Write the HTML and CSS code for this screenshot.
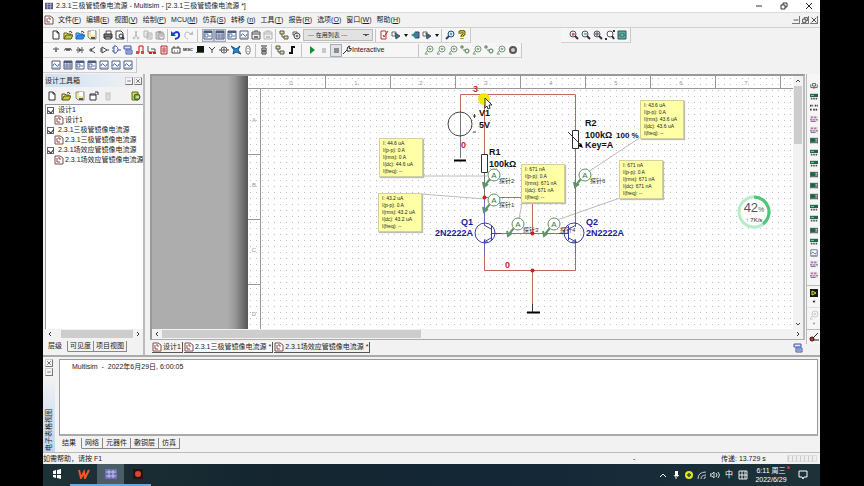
FILE: index.html
```html
<!DOCTYPE html>
<html lang="zh-CN">
  <head>
    <meta charset="utf-8">
    <title>2.3.1三极管镜像电流源 - Multisim</title>
    <link rel="stylesheet" href="styles.css">
  </head>
  <body>
    <!-- icon shapes, all on a 10x10 grid -->
    <svg class="sprite" aria-hidden="true">
      <symbol id="new" viewBox="0 0 10 10"><path d="M2 1h4l2 2v6H2zM6 1v2h2" fill="#fff" stroke="#333"/></symbol>
      <symbol id="open" viewBox="0 0 10 10"><path d="M1 9V3h3l1 1h3v2" fill="#f5ee9a" stroke="#565410"/><path d="M1 9l2-4h7L8 9z" fill="#c5c73c" stroke="#565410"/><path d="M6 2q2-2 3 1" fill="none" stroke="#333"/></symbol>
      <symbol id="folder" viewBox="0 0 10 10"><path d="M1 9V3h3l1 1h3v2" fill="#7cc0f0" stroke="#1668b8"/><path d="M1 9l2-4h7L8 9z" fill="#3490e0" stroke="#1668b8"/><path d="M6 2q2-2 3 1" fill="none" stroke="#333"/></symbol>
      <symbol id="save" viewBox="0 0 10 10"><path d="M2 1h7v8H3L1 7V1z" fill="#eee9a8" stroke="#888"/><path d="M4 1h4v4H4z" fill="#fff"/><path d="M4 7h4v2H4z" fill="#555"/></symbol>
      <symbol id="print" viewBox="0 0 10 10"><path d="M3 4V1h5v3" fill="#fff" stroke="#555"/><path d="M1 4h8v4H1z" fill="#777" stroke="#333"/><path d="M2 7h6v2H2z" fill="#ddd" stroke="#333"/></symbol>
      <symbol id="preview" viewBox="0 0 10 10"><path d="M1 1h5l2 2v6H1z" fill="#fff" stroke="#444"/><circle cx="6" cy="6" r="2" fill="#dfeef5" stroke="#333"/><path d="M7 7l2 2" stroke="#333" stroke-width="2"/></symbol>
      <symbol id="cut" viewBox="0 0 10 10"><path d="M4 1l2 6M6 1L4 7" stroke="#bbb" fill="none"/><circle cx="3" cy="8" r="1" fill="none" stroke="#bbb"/><circle cx="7" cy="8" r="1" fill="none" stroke="#bbb"/></symbol>
      <symbol id="copy" viewBox="0 0 10 10"><path d="M1 1h4v6H1zM4 3h5v6H4z" fill="#eee" stroke="#b5b5b5"/><path d="M5 5h3M5 7h3" stroke="#b5b5b5"/></symbol>
      <symbol id="paste" viewBox="0 0 10 10"><path d="M1 2h7v7H1z" fill="#ccc" stroke="#aaa"/><path d="M3 1h3v2H3z" fill="#999"/><path d="M4 4h5v5H4z" fill="#eee" stroke="#999"/><path d="M5 6h3" stroke="#999"/></symbol>
      <symbol id="undo" viewBox="0 0 10 10"><path d="M2 4q5-4 6 0t-4 5" fill="none" stroke="#1c3fc0" stroke-width="2"/><path d="M0 1v5h5z" fill="#1c3fc0"/></symbol>
      <symbol id="redo" viewBox="0 0 10 10"><path d="M8 4Q3 0 2 4t3 5" fill="none" stroke="#bbb"/><path d="M10 1v4H6z" fill="#bbb"/></symbol>
      <symbol id="panel" viewBox="0 0 10 10"><path d="M1 1h8v8H1z" fill="#fff" stroke="#4c5c80"/><path d="M1 2h8" stroke="#4c5c80" stroke-width="2"/><path d="M2 4h3v3H2zM6 6h2" stroke="#5573b0" fill="none"/></symbol>
      <symbol id="grid" viewBox="0 0 10 10"><path d="M1 1h8v8H1z" fill="#d5dbe8" stroke="#4c5c80"/><path d="M1 2h8" stroke="#4c5c80" stroke-width="2"/><path d="M1 5h8M1 7h8M4 3v6M7 3v6" stroke="#7482a5"/></symbol>
      <symbol id="wave" viewBox="0 0 10 10"><path d="M1 1h8v8H1z" fill="#fff" stroke="#4c5c80"/><path d="M2 6q1-4 3-1t3-1" fill="none" stroke="#3b5fd0"/><path d="M2 8h6" stroke="#888"/></symbol>
      <symbol id="case" viewBox="0 0 10 10"><path d="M1 2h8v7H1z" fill="#eee" stroke="#555"/><path d="M3 1h4M1 4h8" stroke="#555"/><path d="M3 6h4v2H3z" fill="#777"/></symbol>
      <symbol id="tree" viewBox="0 0 10 10"><path d="M1 1h4v3H1zM5 6h4v3H5z" fill="#e2dc85" stroke="#555"/><path d="M3 4v3h2" fill="none" stroke="#555"/></symbol>
      <symbol id="hand" viewBox="0 0 10 10"><path d="M2 2h4v3H2z" fill="#fff" stroke="#555"/><circle cx="6" cy="6" r="3" fill="#ddd" stroke="#555"/><path d="M5 6h2M6 5v2" stroke="#555"/></symbol>
      <symbol id="erc" viewBox="0 0 10 10"><path d="M2 1h5v8H2z" fill="#fff" stroke="#b33"/><path d="M4 5l1 2 4-6" fill="none" stroke="#c22"/></symbol>
      <symbol id="fwd" viewBox="0 0 10 10"><path d="M1 2h4v4H1z" fill="#fff" stroke="#666"/><path d="M4 3l5 3-4 3z" fill="#44687a" stroke="#456"/></symbol>
      <symbol id="back" viewBox="0 0 10 10"><path d="M5 2h4v6H5z" fill="#4a7aa0" stroke="#345"/><path d="M6 2L1 5l5 3z" fill="#2a8797"/></symbol>
      <symbol id="down" viewBox="0 0 10 10"><path d="M3 4h4L5 7z" fill="#111"/></symbol>
      <symbol id="find" viewBox="0 0 10 10"><circle cx="6" cy="4" r="3" fill="#cfe6f0" stroke="#234a78"/><path d="M4 6L1 9" stroke="#234a78" stroke-width="2"/><path d="M5 4h2" stroke="#234a78"/></symbol>
      <symbol id="help" viewBox="0 0 10 10"><path d="M3 4V2q2-2 4 0v2L5 6v1M5 8v1" fill="none" stroke="#6b6800" stroke-width="3"/><path d="M3 4V2q2-2 4 0v2L5 6v1M5 8v1" fill="none" stroke="#d5d526"/></symbol>
      <symbol id="zoomin" viewBox="0 0 10 10"><circle cx="4" cy="4" r="3" fill="#e8eef2" stroke="#555"/><path d="M6 6l3 3" stroke="#334" stroke-width="2"/><path d="M3 4h3M4 3v3" stroke="#c33"/></symbol>
      <symbol id="zoomout" viewBox="0 0 10 10"><circle cx="4" cy="4" r="3" fill="#e8eef2" stroke="#555"/><path d="M6 6l3 3" stroke="#334" stroke-width="2"/><path d="M3 4h3" stroke="#248a6a"/></symbol>
      <symbol id="zoomarea" viewBox="0 0 10 10"><circle cx="4" cy="4" r="3" fill="#d8e2ea" stroke="#555"/><path d="M3 3h2v2H3z" fill="none" stroke="#556"/><path d="M6 6l3 3" stroke="#334" stroke-width="2"/></symbol>
      <symbol id="zoomfit" viewBox="0 0 10 10"><circle cx="5" cy="4" r="3" fill="#fff" stroke="#555"/><path d="M7 6l2 3M0 9h2M8 1h2" stroke="#334" stroke-width="2"/></symbol>
      <symbol id="full" viewBox="0 0 10 10"><path d="M1 1h8v8H1z" fill="#5fa8a0" stroke="#285a58"/><path d="M3 4h4v2H3z" fill="#dff" stroke="#285a58"/></symbol>

      <symbol id="source" viewBox="0 0 10 10"><path d="M2 4h6M5 2v5M4 6h2" stroke="#555"/></symbol>
      <symbol id="resistor" viewBox="0 0 10 10"><path d="M1 5h1l1-2 1 3 1-3 1 3 1-3 1 2h1" fill="none" stroke="#555"/></symbol>
      <symbol id="diode" viewBox="0 0 10 10"><path d="M1 5h8M3 2v6M7 2v6" stroke="#666"/><path d="M4 3l3 2-3 2z" fill="#555"/></symbol>
      <symbol id="bjt" viewBox="0 0 10 10"><path d="M2 5h2M4 3v4M4 5l4-3M4 5l4 3" fill="none" stroke="#444"/></symbol>
      <symbol id="amp" viewBox="0 0 10 10"><path d="M3 2l5 3-5 3zM1 4h2M1 6h2M8 5h2" fill="#fff" stroke="#444"/></symbol>
      <symbol id="gate" viewBox="0 0 10 10"><path d="M3 1h2q4 3 0 7H3zM1 3h2M1 6h2M7 5h3" fill="#fff" stroke="#4459a0"/></symbol>
      <symbol id="gates" viewBox="0 0 10 10"><path d="M1 1h7v3H1zM3 5h6v4H3z" fill="#dde5fa" stroke="#3a53a4"/><path d="M5 6v2M7 6v2" stroke="#3a53a4"/></symbol>
      <symbol id="chip" viewBox="0 0 10 10"><path d="M4 8V1h4v7" fill="none" stroke="#b01818"/><path d="M1 6h3v3H1zM6 6h3v3H6z" fill="#d84848"/></symbol>
      <symbol id="mixed" viewBox="0 0 10 10"><path d="M1 1v6h7V4H4" fill="none" stroke="#555"/><path d="M2 7h3v2H2zM6 7h3v2H6z" fill="#c22"/></symbol>
      <symbol id="seg" viewBox="0 0 10 10"><path d="M2 1h6v8H2z" fill="#f3dada" stroke="#a33"/><path d="M4 3h2v4H4zM4 5h2" fill="none" stroke="#c55"/></symbol>
      <symbol id="relay" viewBox="0 0 10 10"><path d="M1 3h8v5H1zM3 1v2M7 1v2M3 6h1M6 6h1" fill="#fff" stroke="#444"/></symbol>
      <symbol id="screen" viewBox="0 0 10 10"><path d="M2 1h7v6H2z" fill="#111"/><path d="M1 7h8v1H1z" fill="#396b3b"/></symbol>
      <symbol id="antenna" viewBox="0 0 10 10"><path d="M5 8V5M2 2l3 3 3-3" fill="none" stroke="#444"/></symbol>
      <symbol id="motor" viewBox="0 0 10 10"><circle cx="5" cy="5" r="3" fill="#fff" stroke="#555"/><path d="M0 5h10M5 3v4" stroke="#555"/></symbol>
      <symbol id="ni" viewBox="0 0 10 10"><path d="M0 1l5 3 4-3-2 4 3 4-5-2-3 2 1-4z" fill="#258ccf" stroke="#14508c"/></symbol>
      <symbol id="conn" viewBox="0 0 10 10"><path d="M4 1h2l1 2v4L6 9H4L3 7V3z" fill="#fff" stroke="#777"/><path d="M5 3v1M5 6v1" stroke="#777"/></symbol>
      <symbol id="mcu" viewBox="0 0 10 10"><path d="M2 1h6M3 3h4v6H3zM4 5h2v2H4z" fill="#fff" stroke="#333"/></symbol>
      <symbol id="bus" viewBox="0 0 10 10"><path d="M2 8h3V2h3" fill="none" stroke="#111" stroke-width="2"/></symbol>
      <symbol id="play" viewBox="0 0 10 10"><path d="M3 1l5 4-5 4z" fill="#149035"/></symbol>
      <symbol id="pause" viewBox="0 0 10 10"><path d="M4 3v5M6 3v5" stroke="#999"/></symbol>
      <symbol id="stop" viewBox="0 0 10 10"><path d="M3 3h5v5H3z" fill="#8c8c8c"/></symbol>
      <symbol id="wrench" viewBox="0 0 10 10"><path d="M1 9l4-4M5 5q0-4 3-4L7 3l1 1 1-1q1 4-4 3z" fill="#eee" stroke="#333"/></symbol>
      <symbol id="probe" viewBox="0 0 10 10"><circle cx="6" cy="4" r="3" fill="#eef5ee" stroke="#7a9a7a"/><path d="M5 3l1 2 1-2M3 6L1 9h3" fill="none" stroke="#7a9a7a"/></symbol>
      <symbol id="probe2" viewBox="0 0 10 10"><circle cx="7" cy="6" r="2" fill="#eef5ee" stroke="#4f7a4f"/><path d="M0 2h4M2 0v4M3 5h2" stroke="#4f7a4f"/></symbol>
      <symbol id="gear" viewBox="0 0 10 10"><circle cx="5" cy="5" r="3" fill="#ccc" stroke="#555" stroke-width="2"/></symbol>

      <symbol id="sheet" viewBox="0 0 10 10"><path d="M1 1h5l3 2v6H1z" fill="#fff" stroke="#7d4d4d"/><path d="M3 3v4h3M4 3h2v2" fill="none" stroke="#9d4444"/></symbol>
      <symbol id="rename" viewBox="0 0 10 10"><path d="M1 3h6v6H1zM1 4h6" fill="#fff" stroke="#334"/><path d="M6 1h3v3" fill="none" stroke="#334"/></symbol>
      <symbol id="trash" viewBox="0 0 10 10"><path d="M3 3h4v6H3zM2 2h6" fill="#ddd" stroke="#c4c4c4"/></symbol>
      <symbol id="config" viewBox="0 0 10 10"><path d="M1 1h6v8H1z" fill="#d3d95b" stroke="#646b20"/><circle cx="6" cy="6" r="3" fill="#87ac4b" stroke="#385820"/><path d="M5 6h3" stroke="#fff"/></symbol>
      <symbol id="meter" viewBox="0 0 10 8"><path d="M0 0h10v4H0z" fill="#236548"/><path d="M1 2h4" stroke="#7ff0ac"/><path d="M1 6h2M4 6h2M7 6h2" stroke="#555" stroke-width="2"/></symbol>
      <symbol id="scope" viewBox="0 0 10 8"><path d="M0 0h10v7H0z" fill="#5c6a6a"/><path d="M1 1h5v4H1z" fill="#0d6b3c"/><path d="M7 2h2M7 4h2M1 7h8" stroke="#ddd"/></symbol>
      <symbol id="agilent" viewBox="0 0 10 8"><path d="M0 0h10v8H0z" fill="#eee1ec"/><path d="M1 1h3v2H1zM5 1h3v2H5z" fill="#bb7b9b"/><path d="M0 5h3M4 5h2M7 5h3M1 7h6" stroke="#4d4c80"/></symbol>
      <symbol id="multi" viewBox="0 0 10 8"><path d="M1 2v4h8V2M3 1h4v3H3z" fill="#fff" stroke="#2c4c44"/><path d="M4 5h2v2H4z" fill="#c33"/></symbol>
      <symbol id="dots" viewBox="0 0 10 8"><path d="M0 1h4M6 1h4M0 6h3M4 6h2M7 6h3" stroke="#333" stroke-width="2" stroke-dasharray="2 1"/></symbol>

      <symbol id="uparr" viewBox="0 0 10 10"><path d="M3 6l2-2 2 2" fill="none" stroke="#444"/></symbol>
      <symbol id="downarr" viewBox="0 0 10 10"><path d="M3 4l2 2 2-2" fill="none" stroke="#444"/></symbol>
      <symbol id="leftarr" viewBox="0 0 10 10"><path d="M6 3L4 5l2 2" fill="none" stroke="#333"/></symbol>
      <symbol id="rightarr" viewBox="0 0 10 10"><path d="M4 3l2 2-2 2" fill="none" stroke="#333"/></symbol>
      <symbol id="min" viewBox="0 0 10 10"><path d="M2 5h6" stroke="#333"/></symbol>
      <symbol id="max" viewBox="0 0 10 10"><path d="M2 4h4v4H2zM4 4V2h4v4H6" fill="none" stroke="#333"/></symbol>
      <symbol id="close" viewBox="0 0 10 10"><path d="M2 2l6 6M8 2L2 8" stroke="#222"/></symbol>
    </svg>

    <div class="window">
      <header class="titlebar">
        <svg class="appicon" viewBox="0 0 10 10"><path d="M0 1h10v8H0z" fill="#53577d"/><path d="M1 3h8M1 6h8M3 1v8M7 1v8" stroke="#a6abc9"/></svg>
        <span class="title">2.3.1三极管镜像电流源 - Multisim - [2.3.1三极管镜像电流源 *]</span>
        <div class="winbuttons">
          <button aria-label="最小化"><svg><use href="#min"/></svg></button>
          <button aria-label="还原"><svg><use href="#max"/></svg></button>
          <button aria-label="关闭"><svg><use href="#close"/></svg></button>
        </div>
      </header>

      <nav class="menubar">
        <svg class="icon"><use href="#sheet"/></svg>
        <ul class="menu">
          <li>文件(<u>F</u>)</li>
          <li>编辑(<u>E</u>)</li>
          <li>视图(<u>V</u>)</li>
          <li>绘制(<u>P</u>)</li>
          <li>MCU(<u>M</u>)</li>
          <li>仿真(<u>S</u>)</li>
          <li>转移 (<u>n</u>)</li>
          <li>工具(<u>T</u>)</li>
          <li>报告(<u>R</u>)</li>
          <li>选项(<u>O</u>)</li>
          <li>窗口(<u>W</u>)</li>
          <li>帮助(<u>H</u>)</li>
        </ul>
        <div class="mdibuttons">
          <button aria-label="最小化文档"><svg><use href="#min"/></svg></button>
          <button aria-label="还原文档"><svg><use href="#max"/></svg></button>
          <button aria-label="关闭文档"><svg><use href="#close"/></svg></button>
        </div>
      </nav>

      <div class="toolrow">
        <div class="toolbar">
          <button><svg><use href="#new"/></svg></button>
          <button><svg><use href="#open"/></svg></button>
          <button><svg><use href="#folder"/></svg></button>
          <button><svg><use href="#save"/></svg></button>
          <i class="sep"></i>
          <button><svg><use href="#print"/></svg></button>
          <button><svg><use href="#preview"/></svg></button>
          <i class="sep"></i>
          <button><svg><use href="#cut"/></svg></button>
          <button><svg><use href="#copy"/></svg></button>
          <button><svg><use href="#paste"/></svg></button>
          <i class="sep"></i>
          <button><svg><use href="#undo"/></svg></button>
          <button><svg><use href="#redo"/></svg></button>
          <i class="sep wide"></i>
          <button class="on"><svg><use href="#panel"/></svg></button>
          <button class="on"><svg><use href="#grid"/></svg></button>
          <button><svg><use href="#panel"/></svg></button>
          <button><svg><use href="#wave"/></svg></button>
          <button><svg><use href="#case"/></svg></button>
          <button class="off"><svg><use href="#case"/></svg></button>
          <i class="sep"></i>
          <button><svg><use href="#tree"/></svg></button>
          <button><svg><use href="#hand"/></svg></button>
          <select class="inuse" aria-label="在用列表"><option>--- 在用列表 ---</option></select>
          <i class="sep"></i>
          <button><svg><use href="#erc"/></svg></button>
          <button><svg><use href="#fwd"/></svg></button>
          <button class="drop"><svg><use href="#down"/></svg></button>
          <button><svg><use href="#back"/></svg></button>
          <button><svg><use href="#fwd"/></svg></button>
          <button class="drop"><svg><use href="#down"/></svg></button>
          <i class="sep"></i>
          <button><svg><use href="#find"/></svg></button>
          <button><svg><use href="#help"/></svg></button>
        </div>
        <div class="toolbar">
          <button><svg><use href="#zoomin"/></svg></button>
          <button><svg><use href="#zoomout"/></svg></button>
          <button><svg><use href="#zoomarea"/></svg></button>
          <button><svg><use href="#zoomfit"/></svg></button>
          <button><svg><use href="#full"/></svg></button>
        </div>
      </div>

      <div class="toolrow">
        <div class="toolbar">
          <button><svg><use href="#source"/></svg></button>
          <button><svg><use href="#resistor"/></svg></button>
          <button><svg><use href="#diode"/></svg></button>
          <button><svg><use href="#bjt"/></svg></button>
          <button><svg><use href="#amp"/></svg></button>
          <button><svg><use href="#gate"/></svg></button>
          <button><svg><use href="#gates"/></svg></button>
          <button><svg><use href="#chip"/></svg></button>
          <button><svg><use href="#mixed"/></svg></button>
          <button><svg><use href="#seg"/></svg></button>
          <button><svg><use href="#relay"/></svg></button>
          <button class="misc">MISC</button>
          <button><svg><use href="#screen"/></svg></button>
          <button><svg><use href="#antenna"/></svg></button>
          <button><svg><use href="#motor"/></svg></button>
          <button><svg><use href="#ni"/></svg></button>
          <button><svg><use href="#conn"/></svg></button>
          <i class="sep"></i>
          <button><svg><use href="#mcu"/></svg></button>
          <i class="sep"></i>
          <button><svg><use href="#tree"/></svg></button>
          <button><svg><use href="#bus"/></svg></button>
          <i class="sep wide"></i>
          <button><svg><use href="#play"/></svg></button>
          <button><svg><use href="#pause"/></svg></button>
          <button class="on"><svg><use href="#stop"/></svg></button>
          <button class="interactive"><svg><use href="#wrench"/></svg>Interactive</button>
          <i class="sep wide"></i>
          <button><svg><use href="#probe"/></svg></button>
          <button><svg><use href="#probe"/></svg></button>
          <button><svg><use href="#probe"/></svg></button>
          <button><svg><use href="#probe2"/></svg></button>
          <button><svg><use href="#probe"/></svg></button>
          <button><svg><use href="#probe2"/></svg></button>
          <button><svg><use href="#probe"/></svg></button>
          <button><svg><use href="#gear"/></svg></button>
        </div>
      </div>

      <div class="toolrow">
        <div class="toolbar">
          <button><svg><use href="#wave"/></svg></button>
          <button><svg><use href="#grid"/></svg></button>
          <button><svg><use href="#panel"/></svg></button>
          <button><svg><use href="#panel"/></svg></button>
          <button><svg><use href="#wave"/></svg></button>
          <button><svg><use href="#wave"/></svg></button>
          <button><svg><use href="#wave"/></svg></button>
        </div>
      </div>

      <main class="workspace">
        <aside class="toolbox">
          <h2 class="toolbox-head">设计工具箱
            <button class="mini"><svg><use href="#min"/></svg></button>
            <button class="mini"><svg><use href="#close"/></svg></button>
          </h2>
          <div class="toolbox-tools">
            <button><svg><use href="#new"/></svg></button>
            <button><svg><use href="#open"/></svg></button>
            <button><svg><use href="#save"/></svg></button>
            <button><svg><use href="#rename"/></svg></button>
            <button><svg><use href="#trash"/></svg></button>
            <button class="last"><svg><use href="#config"/></svg></button>
          </div>
          <ul class="tree">
            <li><label><input type="checkbox" checked>设计1</label></li>
            <li class="child"><svg class="icon"><use href="#sheet"/></svg>设计1</li>
            <li><label><input type="checkbox" checked>2.3.1三极管镜像电流源</label></li>
            <li class="child"><svg class="icon"><use href="#sheet"/></svg>2.3.1三极管镜像电流源</li>
            <li><label><input type="checkbox" checked>2.3.1场效应管镜像电流源</label></li>
            <li class="child"><svg class="icon"><use href="#sheet"/></svg>2.3.1场效应管镜像电流源</li>
          </ul>
          <div class="hscroll">
            <svg><use href="#leftarr"/></svg>
            <div class="track"><div class="thumb"></div></div>
            <svg><use href="#rightarr"/></svg>
          </div>
          <div class="tabs">
            <button class="tab active">层级</button>
            <button class="tab">可见度</button>
            <button class="tab">项目视图</button>
          </div>
        </aside>

        <section class="document">
          <div class="view">
            <div class="viewrow">
              <div class="canvas">
                <div class="gutter"></div>
                <svg class="schematic">
                  <defs>
                    <pattern id="dotgrid" width="6" height="6" patternUnits="userSpaceOnUse"><path d="M2 2h1v1H2z" fill="#bcbcc4"/></pattern>
                    <g id="marker">
                      <path d="M-4 4l-5 6m-2-3l1 5 4-3" fill="none" stroke="#5f9468" stroke-width="2"/>
                      <circle r="6" fill="#fff" stroke="#5f8f68"/>
                      <text class="amp" y="3">A</text>
                    </g>
                  </defs>
                  <rect width="100%" height="100%" fill="url(#dotgrid)"/>
                  <!-- sheet border and zone letters -->
                  <path class="ruler" d="M0 12.5h2000M12.5 12v500M77.5 0v12M142.5 0v12M207.5 0v12M272.5 0v12M337.5 0v12M402.5 0v12M467.5 0v12M532.5 0v12M0 78.5h12M0 143.5h12M0 208.5h12"/>
                  <g class="zone">
                    <text x="43" y="9">0</text><text x="108" y="9">1</text><text x="173" y="9">2</text><text x="238" y="9">3</text>
                    <text x="303" y="9">4</text><text x="368" y="9">5</text><text x="433" y="9">6</text><text x="498" y="9">7</text>
                    <text x="6" y="46">A</text><text x="6" y="111">B</text><text x="6" y="176">C</text><text x="6" y="240">D</text>
                  </g>
                  <!-- leaders from probes to their notes -->
                  <path class="leader" d="M174 100l65 0M173 118l64 5M271 143l3-16M309 144l63-22M340 96l53-35"/>
                  <!-- wires -->
                  <path class="wire" d="M212.5 36V18.5h115V54M236.5 18v61M236.5 121.5h48V157M244 157.5h70M236.5 170v24.5h91V168M284.5 194v34"/>
                  <path class="pin" d="M212.5 36v46M236.5 97v23M327.5 73v72"/>
                  <path class="qpin" d="M236.5 122v27M236.5 165v14M327.5 144v7M327.5 165v12"/>
                  <path d="M206 84.500h12M279 236.500h13" stroke="#000" stroke-width="2"/>
                  <path d="M284.500 228v8" stroke="#333"/>
                  <circle class="node" cx="236.500" cy="121.500" r="2"/><circle class="node" cx="284.500" cy="157.500" r="2"/><circle class="node" cx="284.500" cy="194.500" r="2"/>
                  <!-- V1 -->
                  <circle cx="212" cy="48" r="12" fill="none" stroke="#444"/>
                  <path d="M225 40h3M226.500 38v4M225 56h3" stroke="#444"/>
                  <!-- R1, R2 -->
                  <path d="M233.500 78.500h6v18h-6zM324.500 54.500h6v18h-6z" fill="#fff" stroke="#333"/>
                  <path d="M320 56l14 14" stroke="#333"/><path d="M335 72l-5-2 3-3z" fill="#000"/>
                  <!-- Q1, Q2 -->
                  <g fill="none" stroke="#3c3caa">
                    <circle cx="237" cy="157" r="10"/><circle cx="326" cy="157" r="10"/>
                    <path d="M243.500 150v14M244 157.500h9M243 153l-7-4M243 162l-7 4M237 163l-1 3 4 0"/>
                    <path d="M320.500 150v14M311 157.500h9M321 153l7-4M321 162l7 4M327 163l1 3-4 0"/>
                  </g>
                  <!-- probes -->
                  <use href="#marker" x="246" y="99"/><use href="#marker" x="246" y="124"/>
                  <use href="#marker" x="270" y="148"/><use href="#marker" x="306" y="148"/>
                  <use href="#marker" x="337" y="99"/>
                  <g class="probename">
                    <text x="251" y="107">探针2</text><text x="251" y="131">探针1</text><text x="275" y="156">探针3</text>
                    <text x="312" y="156">探针4</text><text x="342" y="107">探针6</text>
                  </g>
                  <g class="net"><text x="225" y="16">3</text><text x="213" y="72">0</text><text x="257" y="192">0</text></g>
                  <g class="value">
                    <text x="231" y="40">V1</text><text x="231" y="52">5V</text>
                    <text x="241" y="79">R1</text><text x="241" y="91">100kΩ</text>
                    <text x="337" y="50">R2</text><text x="337" y="62">100kΩ</text><text x="337" y="72">Key=A</text>
                    <text class="percent" x="368" y="62">100 %</text>
                  </g>
                  <g class="value blue">
                    <text x="213" y="149">Q1</text><text x="187" y="160">2N2222A</text>
                    <text x="338" y="149">Q2</text><text x="338" y="160">2N2222A</text>
                  </g>
                </svg>
                <div class="note note-a">I: 44.6 uA<br>I(p-p): 0 A<br>I(rms): 0 A<br>I(dc): 44.6 uA<br>I(freq): --</div>
                <div class="note note-b">I: 43.2 uA<br>I(p-p): 0 A<br>I(rms): 43.2 uA<br>I(dc): 43.2 uA<br>I(freq): --</div>
                <div class="note note-c">I: 671 nA<br>I(p-p): 0 A<br>I(rms): 671 nA<br>I(dc): 671 nA<br>I(freq): --</div>
                <div class="note note-d">I: 671 nA<br>I(p-p): 0 A<br>I(rms): 671 nA<br>I(dc): 671 nA<br>I(freq): --</div>
                <div class="note note-e">I: 43.6 uA<br>I(p-p): 0 A<br>I(rms): 43.6 uA<br>I(dc): 43.6 uA<br>I(freq): --</div>
                <svg class="pointer" viewBox="0 0 14 18"><circle cx="6" cy="6" r="6" fill="#f2e800"/><path d="M7 5v10l2-2 1 3 2-1-1-3h3z" fill="#fff" stroke="#333"/></svg>
                <div class="speedball">
                  <svg viewBox="0 0 34 34"><circle cx="17" cy="17" r="15" fill="#fff" stroke="#b6ecc9" stroke-width="3"/><path d="M17 2a15 15 0 0 1 9 27" fill="none" stroke="#49c877" stroke-width="3"/></svg>
                  <div class="speedtext"><span class="pct">42<small>%</small></span><span class="rate"><b>↑</b> 7K/s</span></div>
                </div>
              </div>
              <div class="vscroll">
                <svg><use href="#uparr"/></svg>
                <div class="track"><div class="thumb"></div></div>
                <svg><use href="#downarr"/></svg>
              </div>
            </div>
            <div class="hscroll">
              <svg><use href="#leftarr"/></svg>
              <div class="track"><div class="thumb"></div></div>
              <svg><use href="#rightarr"/></svg>
            </div>
          </div>
          <div class="doctabs">
            <button class="doctab"><svg><use href="#sheet"/></svg>设计1</button>
            <button class="doctab active"><svg><use href="#sheet"/></svg>2.3.1三极管镜像电流源 *</button>
            <button class="doctab"><svg><use href="#sheet"/></svg>2.3.1场效应管镜像电流源 *</button>
            <svg class="icon end"><use href="#gates"/></svg>
          </div>
        </section>

        <aside class="instruments">
          <div class="meters">
            <button><svg><use href="#multi"/></svg></button>
            <button><svg><use href="#meter"/></svg></button>
            <button><svg><use href="#dots"/></svg></button>
            <button><svg><use href="#agilent"/></svg></button>
            <button><svg><use href="#agilent"/></svg></button>
            <button><svg><use href="#scope"/></svg></button>
            <button><svg><use href="#meter"/></svg></button>
            <button><svg><use href="#meter"/></svg></button>
            <button><svg><use href="#scope"/></svg></button>
            <button><svg><use href="#scope"/></svg></button>
            <button><svg><use href="#scope"/></svg></button>
            <button><svg><use href="#meter"/></svg></button>
            <button><svg><use href="#meter"/></svg></button>
            <button><svg><use href="#scope"/></svg></button>
            <button><svg><use href="#meter"/></svg></button>
            <button><svg><use href="#wave"/></svg></button>
            <button><svg><use href="#agilent"/></svg></button>
            <button><svg><use href="#agilent"/></svg></button>
          </div>
          <div class="group">
            <button><svg viewBox="0 0 10 10"><path d="M1 1h8v8H1z" fill="#181c10"/><path d="M3 3l4 2-4 2z" fill="none" stroke="#e0df45"/></svg></button>
            <button><svg><use href="#down"/></svg></button>
          </div>
          <div class="group off">
            <button><svg><use href="#probe"/></svg></button>
            <button><svg><use href="#down"/></svg></button>
          </div>
          <div class="group">
            <button><svg viewBox="0 0 10 10"><circle cx="3" cy="7" r="2" fill="#c33" stroke="#400"/><path d="M4 6l5-5M4 8h6" stroke="#222"/></svg></button>
          </div>
        </aside>
      </main>

      <section class="spreadsheet">
        <div class="strip">
          <button class="mini"><svg><use href="#close"/></svg></button>
          <button class="mini"><svg><use href="#min"/></svg></button>
          <span class="striptitle">电子表格视图</span>
        </div>
        <div class="results">
          <div class="log">Multisim &nbsp;- &nbsp;2022年6月29日, 6:00:05</div>
          <div class="tabs">
            <button class="tab active">结果</button>
            <button class="tab">网络</button>
            <button class="tab">元器件</button>
            <button class="tab">敷铜层</button>
            <button class="tab">仿真</button>
          </div>
        </div>
      </section>

      <footer class="status">
        <span class="hint">如需帮助，请按 F1</span>
        <span class="dash">-</span>
        <span class="transfer">传递: 13.729 s</span>
        <span class="progress"></span>
      </footer>
    </div>

    <div class="taskbar">
      <div class="apps">
        <button aria-label="开始"><svg viewBox="0 0 10 10"><path d="M1 2l3-1v4H1zM5 1l4-1v5H5zM1 6h3v3L1 8zM5 6h4v4L5 9z" fill="#fff"/></svg></button>
        <button class="running" aria-label="WPS"><svg viewBox="0 0 12 10"><path d="M1 1l2 8 3-6 1 6 4-8" fill="none" stroke="#f2552c" stroke-width="2"/></svg></button>
        <button class="running current" aria-label="Multisim"><svg viewBox="0 0 12 10"><path d="M0 0h12v10H0z" fill="#6e6fb2"/><path d="M1 3h10M1 7h10M4 1v8M8 1v8" stroke="#c5c6ec"/></svg></button>
        <button class="running" aria-label="录屏"><svg viewBox="0 0 12 10"><path d="M1 0h10v10H1z" fill="#281414"/><circle cx="6" cy="5" r="3" fill="#e5402c"/></svg></button>
      </div>
      <div class="tray">
        <svg viewBox="0 0 10 10"><path d="M2 7l3-3 3 3" fill="none" stroke="#fff"/></svg>
        <svg viewBox="0 0 10 10"><path d="M4 1h3v5H4z" fill="#fff"/><path d="M3 5q2 4 5 0M5 7v2" fill="none" stroke="#ddd"/></svg>
        <svg viewBox="0 0 10 10"><circle cx="5" cy="5" r="4" fill="#e5e51c"/><path d="M3 5h4M5 3v4" stroke="#47661c" stroke-width="2"/></svg>
        <svg viewBox="0 0 10 10"><path d="M1 9q0-7 8-7M4 9q0-4 5-4M7 9q0-2 2-2" fill="none" stroke="#ccc"/></svg>
        <svg viewBox="0 0 10 10"><path d="M0 4h2l2-2v6L2 6H0z" fill="none" stroke="#ddd"/><path d="M6 3q2 2 0 4M8 2q3 3 0 6" fill="none" stroke="#ddd"/></svg>
        <span class="ime">中</span>
        <svg class="keys" viewBox="0 0 10 10"><path d="M1 1h8v8H1zM1 5h8M4 1v8M7 1v8" fill="none" stroke="#eee"/></svg>
        <div class="clock">6:11 周三<br>2022/6/29<i class="rec"></i></div>
        <svg class="notify" viewBox="0 0 10 10"><path d="M1 1h8v6H6L5 9 4 7H1z" fill="none" stroke="#fff"/></svg>
      </div>
    </div>
  </body>
</html>
```
FILE: styles.css
```css
* {
  box-sizing: border-box;
}
body {
  margin: 0;
  min-height: 100vh;
  padding: 0 44px 0 43px;
  background: #000;
  color: #222;
  font: 7px/10px "Liberation Sans", "Noto Sans CJK SC", sans-serif;
  display: flex; flex-direction: column;
}
button {
  display: flex; align-items: center; justify-content: center;
  margin: 0; padding: 0;
  border: 0; background: none;
  color: inherit; font: inherit;
}
ul {
  margin: 0; padding: 0;
  list-style: none;
}
svg {
  display: block; flex: none;
  width: 10px; height: 10px;
}
.sprite {
  position: absolute; width: 0; height: 0;
}
.window {
  flex: 1;
  display: flex; flex-direction: column;
  background: #f2f2f2;
}

/* title and menu */
.titlebar {
  display: flex; align-items: center;
  height: 13px; padding: 0 6px 0 2px;
  background: #fff;
  border-bottom: 1px solid #ddd;
}
.appicon {
  width: 8px; height: 8px; margin-right: 3px;
}
.title {
  flex: 1;
}
.winbuttons {
  display: flex; gap: 15px;
}
.menubar {
  display: flex; align-items: center;
  height: 15px; padding-left: 1px;
  border-bottom: 1px solid #d0d0d0;
}
.menu {
  display: flex; flex: 1; gap: 5px;
  padding-left: 4px;
}
.mdibuttons {
  display: flex; gap: 1px; padding-right: 2px;
}
.mdibuttons button {
  width: 8px; height: 8px;
  border-right: 1px solid #777; border-bottom: 1px solid #777;
}
.mdibuttons svg {
  width: 8px; height: 8px;
}

/* toolbars */
.toolrow {
  display: flex; gap: 90px;
  height: 15px;
}
.toolbar {
  display: flex; align-items: center;
  padding: 0 2px 0 7px;
  background: #f6f6f6;
  border-right: 1px solid #c8c8c8; border-bottom: 1px solid #d0d0d0;
}
.toolbar button {
  width: 12px; height: 13px;
}
.toolbar .on {
  background: #dfe4ec;
  border: 1px solid #a4abba;
}
.toolbar .off {
  opacity: .4;
}
.toolbar .drop {
  width: 7px;
}
.toolbar .misc {
  font-size: 4px; font-weight: bold;
}
.toolbar .interactive {
  width: auto; padding-right: 31px;
}
.sep {
  width: 1px; height: 13px; margin: 0 2px 0 1px;
  background: #c4c4c4;
}
.sep.wide {
  margin: 0 4px 0 3px;
}
.inuse {
  width: 70px; height: 12px; margin: 0 1px; padding: 0 4px;
  appearance: none;
  border: 1px solid #bbb;
  background: #e2e2e2;
  background-image: linear-gradient(45deg, transparent 50%, #555 50%), linear-gradient(-45deg, transparent 50%, #555 50%);
  background-position: right 6px center, right 3px center;
  background-size: 3px 3px;
  background-repeat: no-repeat;
  color: #222; font: 6px/10px "Liberation Sans", "Noto Sans CJK SC", sans-serif;
}

/* workspace */
.workspace {
  flex: 1;
  display: flex;
  border-bottom: 2px solid #aaa;
}
.toolbox {
  display: flex; flex-direction: column;
  width: 102px; margin: 1px 5px 0 0; padding-left: 2px;
  border-right: 2px solid #bbb;
}
.toolbox-head {
  display: flex; align-items: center; gap: 1px;
  height: 13px; margin: 0; padding-right: 1px;
  background: linear-gradient(to right, #cfe2f5, #f2f2f2);
  font-size: 7px; font-weight: normal;
}
.toolbox-head .mini:first-of-type {
  margin-left: auto;
}
.mini {
  width: 8px; height: 8px;
  background: #f4f4f4;
  border: 1px solid #ccc; border-right-color: #777; border-bottom-color: #777;
}
.mini svg {
  width: 6px; height: 6px;
}
.toolbox-tools {
  display: flex; gap: 4px;
  height: 17px; padding: 0 2px;
}
.toolbox-tools .last {
  margin-left: auto;
}
.tree {
  flex: 1;
  background: #fff;
  border-top: 1px solid #999; border-left: 1px solid #999;
  overflow: hidden;
  white-space: nowrap;
}
.tree li {
  height: 10px;
}
.tree label {
  display: flex; align-items: center; gap: 4px;
}
.tree input {
  appearance: none;
  width: 7px; height: 7px; margin: 1px 0 0 1px;
  border: 1px solid #666;
}
.tree input:checked::after {
  content: "";
  display: block;
  width: 3px; height: 4px; margin-left: 1px;
  border: solid #333; border-width: 0 1px 1px 0;
  transform: rotate(40deg);
}
.tree .child {
  display: flex; gap: 1px;
  padding-left: 8px;
}
.hscroll {
  display: flex; align-items: center;
  height: 10px;
  background: #f2f2f2;
}
.track {
  flex: 1;
}
.hscroll .track, .hscroll .thumb {
  height: 8px;
}
.thumb {
  background: #cdcdcd;
}
.toolbox .thumb {
  width: 92%; margin-left: 8%;
}
.document .hscroll .thumb {
  width: 41%;
}
.tabs {
  display: flex;
  height: 16px; padding: 2px 0 3px;
}
.tab {
  height: 11px; padding: 0 2px;
  border: 1px solid #888; border-top: 0; border-left: 0;
}
.tab.active {
  padding: 0 5px 0 3px;
  border-color: transparent #888 transparent transparent;
}
.results .tab + .tab {
  padding: 0 3px;
}

/* drawing */
.document {
  flex: 1;
  display: flex; flex-direction: column;
  min-width: 0;
}
.view {
  flex: 1;
  display: flex; flex-direction: column;
  margin-top: 1px;
  border: 2px solid #999; border-bottom: 1px solid #aaa; border-right: 2px solid #bbb;
}
.viewrow {
  flex: 1;
  display: flex;
}
.canvas {
  position: relative;
  flex: 1;
  display: flex;
  background: #fff;
  overflow: hidden;
}
.gutter {
  width: 96px;
  background: linear-gradient(to right, #adadad 78%, #9a9a9a 86%, #555);
}
.schematic {
  flex: 1;
  width: auto; height: auto;
}
.schematic text {
  font-family: "Liberation Sans", "Noto Sans CJK SC", sans-serif;
}
.ruler {
  fill: none; stroke: #999;
}
.zone {
  fill: #999; font-size: 6px; text-anchor: middle;
}
.leader {
  fill: none; stroke: #bbb;
}
.wire {
  fill: none; stroke: #c0665e;
}
.pin {
  fill: none; stroke: #777;
}
.qpin {
  fill: none; stroke: #6a6ab8;
}
.node {
  fill: #d41c1c;
}
.amp {
  fill: #3c7248; font-size: 8px; text-anchor: middle;
}
.probename {
  fill: #333; font-size: 6px;
}
.net {
  fill: #d41c1c; font-size: 9px; font-weight: bold;
}
.value {
  fill: #111; font-size: 9px; font-weight: bold;
}
.value .percent {
  font-size: 8px;
}
.value.blue {
  fill: #1a1aa6;
}
.note {
  position: absolute;
  width: 44px; padding: 1px 3px;
  background: #ffffa6;
  border: 1px solid #d2d29a;
  box-shadow: 1px 1px 1px #bbb;
  font-size: 5px; line-height: 7px;
  white-space: nowrap;
}
.note-a {
  left: 227px; top: 62px;
}
.note-b {
  left: 226px; top: 117px;
}
.note-c {
  left: 369px; top: 88px;
}
.note-d {
  left: 467px; top: 84px;
}
.note-e {
  left: 488px; top: 24px;
}
.pointer {
  position: absolute; left: 326px; top: 17px;
  width: 14px; height: 18px;
}
.speedball {
  position: absolute; right: 22px; top: 119px;
  width: 34px; height: 34px;
}
.speedball svg {
  width: 34px; height: 34px;
}
.speedtext {
  position: absolute; inset: 7px 0 0;
  display: flex; flex-direction: column; align-items: center;
}
.pct {
  color: #555; font-size: 13px; line-height: 12px;
}
.pct small {
  font-size: 7px;
}
.rate {
  font-size: 6px; line-height: 8px;
}
.rate b {
  color: #3a78c8;
}
.vscroll {
  display: flex; flex-direction: column; align-items: center;
  width: 10px;
  background: #f2f2f2;
}
.vscroll .thumb {
  width: 8px; height: 25%;
}
.vscroll .track {
  display: flex;
}
.doctabs {
  display: flex; align-items: center; gap: 1px;
  height: 15px; padding: 0 2px;
}
.doctab {
  gap: 1px;
  height: 11px; padding-right: 1px;
  border-right: 1px solid #555; border-bottom: 1px solid #555;
}
.doctab.active {
  background: #fafafa;
}
.end {
  margin-left: auto;
}

/* instruments */
.instruments {
  display: flex; flex-direction: column;
  width: 14px; margin: 1px 0 11px 1px; padding-top: 6px;
  border-left: 1px solid #bbb;
  background: #f6f6f6;
}
.meters {
  flex: 1;
  display: flex; flex-direction: column; justify-content: space-around;
  padding-bottom: 4px;
}
.instruments button {
  width: 100%;
}
.meters svg {
  width: 8px; height: 8px;
}
.group {
  padding: 2px 0;
  border-top: 1px solid #bbb;
}
.group.off {
  opacity: .4;
}
.group button + button svg {
  height: 7px;
}

/* spreadsheet view */
.spreadsheet {
  display: flex;
  height: 96px;
  border-bottom: 1px solid #bbb;
}
.strip {
  display: flex; flex-direction: column; align-items: center; gap: 1px;
  width: 12px; padding: 2px 0 1px;
  background: linear-gradient(#f2f2f2 20%, #bcd5ef);
}
.striptitle {
  margin-top: auto;
  writing-mode: vertical-rl;
  text-orientation: sideways;
  transform: rotate(180deg);
}
.results {
  flex: 1;
  display: flex; flex-direction: column;
  padding: 2px 2px 0 4px;
}
.log {
  flex: 1;
  padding: 2px 12px;
  background: #fff;
  border: 1px solid #999; border-bottom: 2px solid #aaa;
}

/* status bar */
.status {
  display: flex; align-items: center;
  height: 11px;
}
.hint {
  flex: 1;
}
.dash {
  width: 88px;
}
.transfer {
  width: 66px;
}
.progress {
  width: 30px; height: 7px; margin-right: 3px;
  background: repeating-linear-gradient(to right, #ccc 0 1px, #eee 1px 4px);
  border: 1px solid #ddd;
}

/* taskbar */
.taskbar {
  display: flex; justify-content: space-between;
  height: 22px;
  background: linear-gradient(to right, #1d3236, #14252f 30%, #142838 65%, #1d3238);
  color: #fff;
}
.apps {
  display: flex;
}
.apps button {
  width: 27px;
  border-bottom: 2px solid transparent;
}
.apps svg {
  width: 12px;
}
.apps .running {
  border-color: #66a9dc;
}
.apps .current {
  background: #4b5d66;
}
.tray {
  display: flex; align-items: center; gap: 3px;
  padding-right: 12px;
}
.ime {
  width: 12px;
  font-size: 8px; text-align: center;
}
.clock {
  position: relative;
  width: 40px;
  line-height: 9px; text-align: center;
}
.rec {
  position: absolute; right: 1px; top: 0;
  width: 3px; height: 3px;
  border-radius: 50%;
  background: #e03030;
}
.notify {
  margin-left: 4px;
}
```
